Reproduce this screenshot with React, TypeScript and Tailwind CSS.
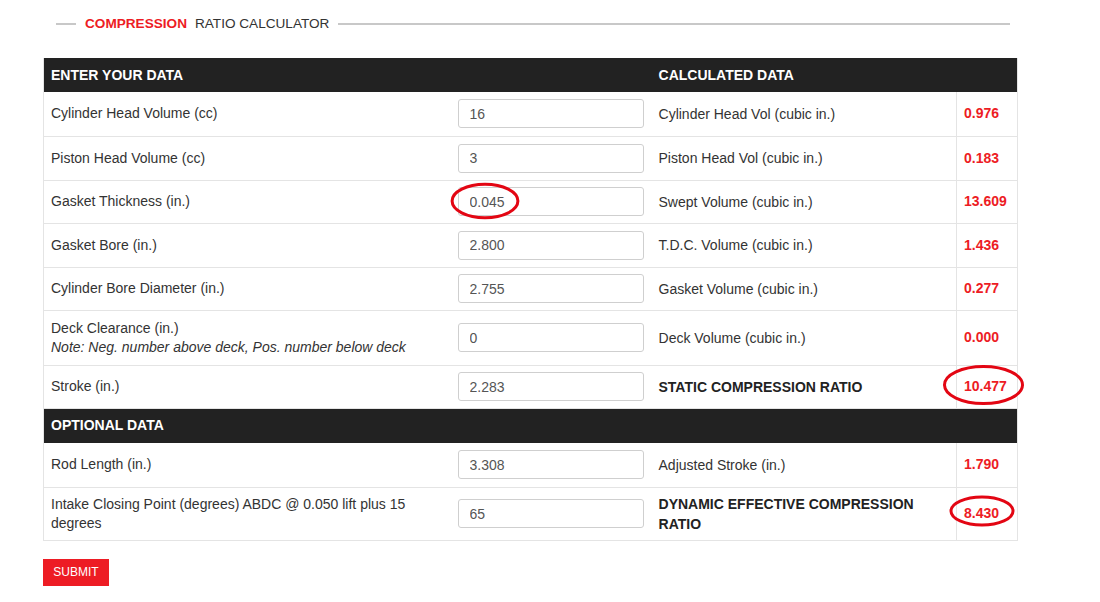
import React from "react";

type Row = {
  label: React.ReactNode;
  value: string;
  calc: React.ReactNode;
  result: string;
  bold?: boolean;
  h?: string;
};

const mainRows: Row[] = [
  { label: "Cylinder Head Volume (cc)", value: "16", calc: "Cylinder Head Vol (cubic in.)", result: "0.976" },
  { label: "Piston Head Volume (cc)", value: "3", calc: "Piston Head Vol (cubic in.)", result: "0.183" },
  { label: "Gasket Thickness (in.)", value: "0.045", calc: "Swept Volume (cubic in.)", result: "13.609", h: "h-[43px]" },
  { label: "Gasket Bore (in.)", value: "2.800", calc: "T.D.C. Volume (cubic in.)", result: "1.436" },
  { label: "Cylinder Bore Diameter (in.)", value: "2.755", calc: "Gasket Volume (cubic in.)", result: "0.277", h: "h-[43px]" },
  {
    label: (
      <>
        Deck Clearance (in.)
        <br />
        <em>Note: Neg. number above deck, Pos. number below deck</em>
      </>
    ),
    value: "0",
    calc: "Deck Volume (cubic in.)",
    result: "0.000",
    h: "h-[55px]",
  },
  { label: "Stroke (in.)", value: "2.283", calc: "STATIC COMPRESSION RATIO", result: "10.477", bold: true, h: "h-[43px]" },
];

const optionalRows: Row[] = [
  { label: "Rod Length (in.)", value: "3.308", calc: "Adjusted Stroke (in.)", result: "1.790" },
  {
    label: "Intake Closing Point (degrees) ABDC @ 0.050 lift plus 15 degrees",
    value: "65",
    calc: "DYNAMIC EFFECTIVE COMPRESSION RATIO",
    result: "8.430",
    bold: true,
    h: "h-[53px]",
  },
];

// hand-drawn marker circle around a value
function Ring({ className }: { className: string }) {
  return (
    <svg className={`pointer-events-none absolute ${className}`} viewBox="0 0 100 50" preserveAspectRatio="none">
      <ellipse cx="50" cy="25" rx="47" ry="22" fill="none" stroke="#e30613" strokeWidth="3" vectorEffect="non-scaling-stroke" />
    </svg>
  );
}

function DataRow({ row, ring, ringResult }: { row: Row; ring?: boolean; ringResult?: string }) {
  return (
    <tr className={`border-b border-[#e4e4e4] ${row.h ?? "h-[44px]"}`}>
      <td className="pl-[7px] pr-2 py-[6px] leading-[19px] align-middle">{row.label}</td>
      <td className="px-[7px] py-[6px] align-middle">
        <div className="relative">
          <input
            readOnly
            value={row.value}
            className="h-[29px] w-[186px] rounded-[3px] border border-[#cfcfcf] bg-white px-[11px] text-[14px] text-[#555] outline-none"
          />
          {ring && <Ring className="-left-[8px] -top-[5px] h-[38px] w-[70px]" />}
        </div>
      </td>
      <td
        className={`pl-[8px] pr-[40px] py-[6px] leading-5 align-middle ${
          row.bold ? "font-bold text-[#222] text-[14px]" : ""
        }`}
      >
        {row.calc}
      </td>
      <td className="border-l border-[#e4e4e4] pl-[7px] py-[6px] align-middle font-bold text-[#ed1c24]">
        <div className="relative">
          {row.result}
          {ringResult === "big" && <Ring className="-left-[22px] -top-[12px] h-[42px] w-[83px]" />}
          {ringResult === "small" && <Ring className="-left-[15px] -top-[8px] h-[32px] w-[66px]" />}
        </div>
      </td>
    </tr>
  );
}

function HeaderRow({ left, right, tall }: { left: string; right?: string; tall?: boolean }) {
  return (
    <tr className="bg-[#222] text-white font-bold">
      <td className={`${tall ? "h-[35px]" : "h-[34px]"} pl-[7px] align-middle`} colSpan={2}>
        {left}
      </td>
      <td className="pl-[8px] align-middle" colSpan={2}>
        {right}
      </td>
    </tr>
  );
}

export default function App() {
  return (
    <div className="min-h-[602px] bg-white text-[14px] text-[#333]" style={{ fontFamily: '"Liberation Sans", Arial, sans-serif' }}>
      {/* Title */}
      <div className="flex items-center pl-[56px] pr-[90px] pt-[15px]">
        <div className="h-[2px] w-[20px] bg-[#c8c8c8]" />
        <h2 className="px-[9px] text-[13.6px] leading-[18px]">
          <span className="font-bold text-[#ed1c24]">COMPRESSION</span>
          <span className="ml-[8px] text-[#333]">RATIO CALCULATOR</span>
        </h2>
        <div className="h-[2px] flex-1 bg-[#c8c8c8]" />
      </div>

      {/* Calculator */}
      <div className="pl-[43px] pt-[25px]">
        <table className="w-[974px] table-fixed border-collapse border-l border-r border-[#e4e4e4]">
          <colgroup>
            <col className="w-[407px]" />
            <col className="w-[200px]" />
            <col className="w-[306px]" />
            <col className="w-[61px]" />
          </colgroup>
          <tbody>
            <HeaderRow left="ENTER YOUR DATA" right="CALCULATED DATA" />
            {mainRows.map((r, i) => (
              <DataRow key={i} row={r} ring={i === 2} ringResult={i === 6 ? "big" : undefined} />
            ))}
            <HeaderRow left="OPTIONAL DATA" tall />
            {optionalRows.map((r, i) => (
              <DataRow key={i} row={r} ringResult={i === 1 ? "small" : undefined} />
            ))}
          </tbody>
        </table>

        <button className="mt-[18px] h-[27px] w-[66px] bg-[#ed1c24] text-[12px] text-white">SUBMIT</button>
      </div>
    </div>
  );
}
